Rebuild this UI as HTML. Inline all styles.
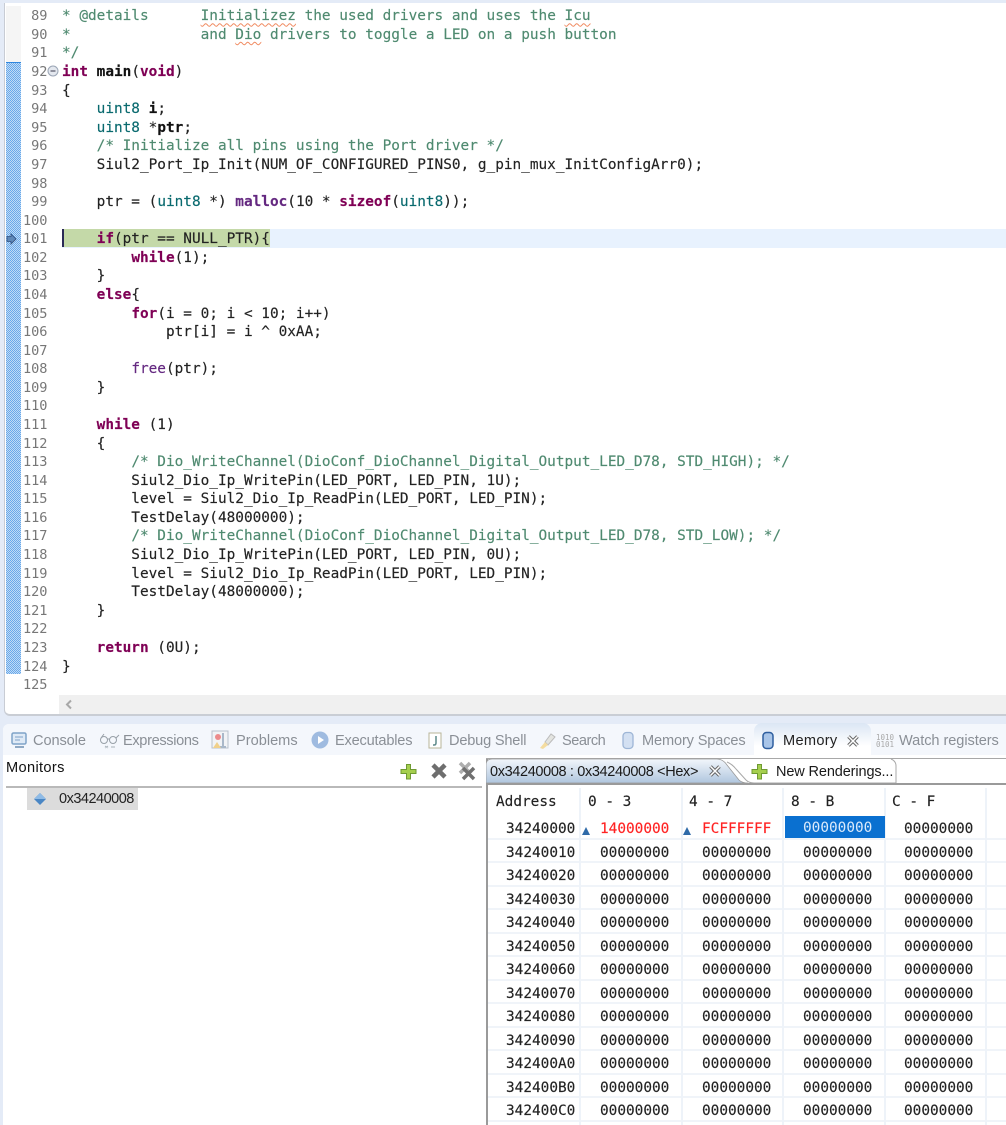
<!DOCTYPE html>
<html><head><meta charset="utf-8"><style>
html,body{margin:0;padding:0}
body{width:1006px;height:1125px;position:relative;overflow:hidden;background:#e4ebf7;font-family:"Liberation Sans",sans-serif}
#wrap{position:absolute;left:0;top:0;width:1006px;height:1125px;filter:blur(.35px);overflow:hidden}
.a{position:absolute}
pre{margin:0;font-family:"DejaVu Sans Mono",monospace;font-size:14.4px;line-height:18.575px;color:#222}
#code{left:62px;top:7.3px;-webkit-text-stroke:.15px}
#nums{left:14px;width:33.5px;top:7.3px;text-align:right;color:#777;font-size:13.6px}
.k{color:#7f0055;font-weight:bold}.c{color:#4f8a70}.t{color:#0a6a6f}.m{color:#642880;font-weight:bold}.b{font-weight:bold;color:#111}
.w{text-decoration:underline wavy #f08a60 1px;text-underline-offset:2px}
.tab{font-size:14.6px;color:#8a8f96;top:733px;white-space:nowrap}
.row{position:absolute;left:488px;width:518px;height:23.5px;box-sizing:border-box;border-bottom:2px solid #f0f4f9;font:14.4px/27px "DejaVu Sans Mono",monospace;color:#222;-webkit-text-stroke:.15px}
.row span{position:absolute;top:0;white-space:nowrap}
.row span:nth-child(1){left:18px}.row span:nth-child(2){left:112px}.row span:nth-child(3){left:214px}.row span:nth-child(4){left:315px}.row span:nth-child(5){left:416px}
.v{position:absolute;top:788px;height:337px;width:2px;background:#eef3f9}
.h{position:absolute;top:791px;font:14.4px/22px "DejaVu Sans Mono",monospace;color:#222;-webkit-text-stroke:.15px}
</style></head><body><div id="wrap">
<div class="a" style="left:4px;top:3px;width:1002px;height:713px;background:#fff;border-left:1px solid #c8ccd4;border-bottom:2px solid #c9cdd4;border-bottom-left-radius:6px;box-sizing:border-box"></div>
<div class="a" style="left:6px;top:6px;width:15px;height:56px;background:#f5f5f5"></div>
<div class="a" style="left:6px;top:62px;width:15px;height:612px;background-color:#8abcee;background-image:conic-gradient(#6aa8ea 25%,#c0dcf6 0 50%,#6aa8ea 0 75%,#c0dcf6 0);background-size:2px 2px;border-top:1px solid #2f86de;box-sizing:border-box"></div>
<div class="a" style="left:62px;top:229px;width:944px;height:19px;background:#e8f2fe"></div>
<div class="a" style="left:62px;top:229px;width:208px;height:18px;background:#c4d9a8"></div>
<div class="a" style="left:62px;top:229px;width:2px;height:18px;background:#2a2a55"></div>
<pre class="a" id="nums">89
90
91
92
93
94
95
96
97
98
99
100
101
102
103
104
105
106
107
108
109
110
111
112
113
114
115
116
117
118
119
120
121
122
123
124
125</pre>
<svg class="a" style="left:47px;top:65px" width="12" height="12"><circle cx="6" cy="6" r="5" fill="#e4e8ef" stroke="#9aa5b5"/><path d="M3.500 6h5" stroke="#556" stroke-width="1.200"/></svg>
<svg class="a" style="left:6px;top:233px" width="11" height="12"><path d="M1 3.500h4V1l5 5-5 5V8.500H1z" fill="#5f88b8" stroke="#2f4f7f" stroke-width=".8"/></svg>
<pre class="a" id="code"><span class="c">* @details      <span class="w">Initializez</span> the used drivers and uses the <span class="w">Icu</span>
*               and <span class="w">Dio</span> drivers to toggle a LED on a push button
*/</span>
<span class="k">int</span> <span class="b">main</span>(<span class="k">void</span>)
{
    <span class="t">uint8</span> <span class="b">i</span>;
    <span class="t">uint8</span> *<span class="b">ptr</span>;
    <span class="c">/* Initialize all pins using the Port driver */</span>
    Siul2_Port_Ip_Init(NUM_OF_CONFIGURED_PINS0, g_pin_mux_InitConfigArr0);

    ptr = (<span class="t">uint8</span> *) <span class="m">malloc</span>(10 * <span class="k">sizeof</span>(<span class="t">uint8</span>));

    <span class="k">if</span>(ptr == NULL_PTR){
        <span class="k">while</span>(1);
    }
    <span class="k">else</span>{
        <span class="k">for</span>(i = 0; i &lt; 10; i++)
            ptr[i] = i ^ 0xAA;

        <span class="m" style="font-weight:normal">free</span>(ptr);
    }

    <span class="k">while</span> (1)
    {
        <span class="c">/* Dio_WriteChannel(DioConf_DioChannel_Digital_Output_LED_D78, STD_HIGH); */</span>
        Siul2_Dio_Ip_WritePin(LED_PORT, LED_PIN, 1U);
        level = Siul2_Dio_Ip_ReadPin(LED_PORT, LED_PIN);
        TestDelay(48000000);
        <span class="c">/* Dio_WriteChannel(DioConf_DioChannel_Digital_Output_LED_D78, STD_LOW); */</span>
        Siul2_Dio_Ip_WritePin(LED_PORT, LED_PIN, 0U);
        level = Siul2_Dio_Ip_ReadPin(LED_PORT, LED_PIN);
        TestDelay(48000000);
    }

    <span class="k">return</span> (0U);
}
</pre>
<div class="a" style="left:59px;top:695px;width:947px;height:19px;background:#f0f0f0"></div>
<svg class="a" style="left:64px;top:699px" width="10" height="11"><path d="M7 1.500L3 5.500l4 4" fill="none" stroke="#a8a8a8" stroke-width="2"/></svg>

<div class="a" style="left:3px;top:724px;width:1003px;height:401px;background:#fff;border-top-left-radius:6px"></div>
<div class="a" style="left:3px;top:724px;width:1003px;height:31px;background:#f4f7fc;border-top-left-radius:6px"></div>
<div class="a" style="left:754px;top:723px;width:117px;height:33px;background:linear-gradient(#dbe6f4,#fff 70%);border-radius:8px 8px 0 0"></div>

<svg class="a" style="left:11px;top:732px" width="17" height="17"><rect x="1" y="1" width="14" height="11" rx="1.500" fill="#dfeaf6" stroke="#7fa3c8" stroke-width="1.500"/><path d="M4 5h8M4 8h5" stroke="#7fa3c8"/><path d="M4 15h9" stroke="#8fa9c4" stroke-width="2"/></svg>
<div class="a tab" style="left:33px;letter-spacing:-.1px">Console</div>
<svg class="a" style="left:98px;top:732px" width="22" height="17"><circle cx="6" cy="8" r="3.500" fill="none" stroke="#98a0a8"/><circle cx="15" cy="8" r="3.500" fill="none" stroke="#98a0a8"/><path d="M9 7l3 0M18 6l3-3M3 6l3-4" stroke="#98a0a8" fill="none"/><path d="M7 14l3 2M10 14l-3 2M13 15h4" stroke="#a8b0b8"/></svg>
<div class="a tab" style="left:123px;letter-spacing:-.36px">Expressions</div>
<svg class="a" style="left:211px;top:730px" width="19" height="20"><rect x="1" y="1" width="16" height="17" fill="#f1f3f6" stroke="#b7c0cc"/><circle cx="7" cy="7" r="3" fill="#ec8b8b"/><path d="M12 3v13M9 17h6" stroke="#a9b8c9" stroke-width="2"/><path d="M2 18l4-6 4 6z" fill="#f0d08a"/></svg>
<div class="a tab" style="left:236px">Problems</div>
<svg class="a" style="left:311px;top:731px" width="18" height="18"><circle cx="9" cy="9" r="8.500" fill="#9fbbe0"/><path d="M7 5l6 4-6 4z" fill="#fff"/></svg>
<div class="a tab" style="left:335px;letter-spacing:-.2px">Executables</div>
<svg class="a" style="left:427px;top:731px" width="16" height="19"><rect x="2" y="2" width="12" height="15" fill="#fff" stroke="#b8b498"/><path d="M9 5v7q0 2-2 2H6" fill="none" stroke="#5d8a8a" stroke-width="1.500"/></svg>
<div class="a tab" style="left:449px;letter-spacing:-.2px">Debug Shell</div>
<svg class="a" style="left:538px;top:731px" width="20" height="19"><path d="M7 11l6-8 4 3-7 8z" fill="#e3e4e0" stroke="#bbb"/><path d="M2 17l5-6 3 3-5 4z" fill="#f4dca0"/></svg>
<div class="a tab" style="left:562px;letter-spacing:-.5px">Search</div>
<svg class="a" style="left:621px;top:731px" width="14" height="19"><rect x="2" y="1.500" width="10" height="16" rx="3.500" fill="#d3e0f2" stroke="#9eb6d6" stroke-width="1.300"/></svg>
<div class="a tab" style="left:642px;letter-spacing:-.15px">Memory Spaces</div>
<svg class="a" style="left:761px;top:731px" width="14" height="19"><rect x="2" y="1.500" width="10" height="16" rx="3.500" fill="#a9c5e8" stroke="#2f5f9f" stroke-width="1.500"/></svg>
<div class="a tab" style="left:783px;color:#222;letter-spacing:.3px">Memory</div>
<svg class="a" style="left:846px;top:734px" width="14" height="14"><path d="M2.500 2.500l9 9M11.500 2.500l-9 9" stroke="#666" stroke-width="3.500"/><path d="M2.500 2.500l9 9M11.500 2.500l-9 9" stroke="#fff" stroke-width="1.500"/></svg>
<div class="a" style="left:876px;top:734px;width:20px;font:7.500px/7px 'DejaVu Sans Mono',monospace;color:#a9a9a9">1010<br>0101</div>
<div class="a tab" style="left:899px;letter-spacing:-.07px">Watch registers</div>

<div class="a" style="left:6px;top:760px;font-size:14.600px;color:#111;letter-spacing:.35px">Monitors</div>
<div class="a" style="left:6px;top:786px;width:476px;height:2px;background:#b9b9b9"></div>
<svg class="a" style="left:400px;top:763px" width="18" height="18"><path d="M6.500 1.500h4v5h5.500v4H10.500v5.500h-4V10.500H1v-4h5.500z" fill="#a5cf4e" stroke="#6f9a32"/></svg>
<svg class="a" style="left:430px;top:762px" width="18" height="18"><path d="M3 3l12 12M15 3L3 15" stroke="#6e6e6e" stroke-width="4.500"/></svg>
<svg class="a" style="left:457px;top:761px" width="20" height="20"><path d="M3 2l10 10M13 2L3 12" stroke="#aeaeae" stroke-width="3.500"/><path d="M6 7l11 11M17 7L6 18" stroke="#707070" stroke-width="3.500"/></svg>
<div class="a" style="left:27px;top:788px;width:111px;height:22px;background:#dcdcdc"></div>
<svg class="a" style="left:33px;top:792px" width="14" height="14"><path d="M7 1l6 6-6 6-6-6z" fill="#4a86c4"/><path d="M1 7l6-6 6 6z" fill="#8fbbe6"/></svg>
<div class="a" style="left:59px;top:791px;font-size:14.500px;color:#222;letter-spacing:-.5px">0x34240008</div>

<div class="a" style="left:486px;top:758px;width:520px;height:367px;border-left:2px solid #9a9a9a;box-sizing:border-box"></div>
<div class="a" style="left:486px;top:758px;width:520px;height:1px;background:#a8a8a8"></div>
<svg class="a" style="left:486px;top:758px" width="416" height="26"><defs><linearGradient id="g" x1="0" y1="0" x2="0" y2="1"><stop offset="0" stop-color="#f2f6fb"/><stop offset="1" stop-color="#adc4dd"/></linearGradient></defs><path d="M0 26V7q0-6 6-6h225q6 0 10 6l12 15q3 3 9 3H0z" fill="url(#g)" stroke="#9a9a9a" stroke-width=".8"/><path d="M241 4q5 2 9 7l10 11q3 3 8 3h142V8q0-5-5-7" fill="#fff" stroke="#a8a8a8"/></svg>
<div class="a" style="left:490px;top:764px;font-size:14.500px;color:#1a1a1a;white-space:nowrap;letter-spacing:-.36px">0x34240008 : 0x34240008 &lt;Hex&gt;</div>
<svg class="a" style="left:708px;top:764px" width="14" height="14"><path d="M2.500 2.500l9 9M11.500 2.500l-9 9" stroke="#666" stroke-width="3.500"/><path d="M2.500 2.500l9 9M11.500 2.500l-9 9" stroke="#fff" stroke-width="1.500"/></svg>
<svg class="a" style="left:751px;top:763px" width="18" height="18"><path d="M6.500 1.500h4v5h5.500v4H10.500v5.500h-4V10.500H1v-4h5.500z" fill="#a5cf4e" stroke="#6f9a32"/></svg>
<div class="a" style="left:776px;top:764px;font-size:14.500px;color:#1a1a1a;letter-spacing:-.12px">New Renderings...</div>
<div class="a" style="left:488px;top:783px;width:518px;height:2px;background:#9a9a9a"></div>

<div class="h" style="left:496px">Address</div>
<div class="h" style="left:588px">0 - 3</div>
<div class="h" style="left:689px">4 - 7</div>
<div class="h" style="left:791px">8 - B</div>
<div class="h" style="left:892px">C - F</div>

<div class="row" style="top:816px"><span>34240000</span><span style="color:#f22">14000000</span><span style="color:#f22">FCFFFFFF</span><span></span><span>00000000</span></div>
<div class="row" style="top:839.500px"><span>34240010</span><span>00000000</span><span>00000000</span><span>00000000</span><span>00000000</span></div>
<div class="row" style="top:863px"><span>34240020</span><span>00000000</span><span>00000000</span><span>00000000</span><span>00000000</span></div>
<div class="row" style="top:886.500px"><span>34240030</span><span>00000000</span><span>00000000</span><span>00000000</span><span>00000000</span></div>
<div class="row" style="top:910px"><span>34240040</span><span>00000000</span><span>00000000</span><span>00000000</span><span>00000000</span></div>
<div class="row" style="top:933.500px"><span>34240050</span><span>00000000</span><span>00000000</span><span>00000000</span><span>00000000</span></div>
<div class="row" style="top:957px"><span>34240060</span><span>00000000</span><span>00000000</span><span>00000000</span><span>00000000</span></div>
<div class="row" style="top:980.500px"><span>34240070</span><span>00000000</span><span>00000000</span><span>00000000</span><span>00000000</span></div>
<div class="row" style="top:1004px"><span>34240080</span><span>00000000</span><span>00000000</span><span>00000000</span><span>00000000</span></div>
<div class="row" style="top:1027.500px"><span>34240090</span><span>00000000</span><span>00000000</span><span>00000000</span><span>00000000</span></div>
<div class="row" style="top:1051px"><span>342400A0</span><span>00000000</span><span>00000000</span><span>00000000</span><span>00000000</span></div>
<div class="row" style="top:1074.500px"><span>342400B0</span><span>00000000</span><span>00000000</span><span>00000000</span><span>00000000</span></div>
<div class="row" style="top:1098px"><span>342400C0</span><span>00000000</span><span>00000000</span><span>00000000</span><span>00000000</span></div>

<div class="v" style="left:579px"></div><div class="v" style="left:681px"></div><div class="v" style="left:782px"></div><div class="v" style="left:884px"></div><div class="v" style="left:985px"></div>
<div class="a" style="left:785px;top:816px;width:100px;height:22px;background:#0a70d0"></div>
<div class="a" style="left:803px;top:816px;font:14.400px/25px 'DejaVu Sans Mono',monospace;color:#dbeafb">00000000</div>
<svg class="a" style="left:581px;top:826px" width="10" height="10"><path d="M5 1l4 8H1z" fill="#2f6aa8"/></svg>
<svg class="a" style="left:682px;top:826px" width="10" height="10"><path d="M5 1l4 8H1z" fill="#2f6aa8"/></svg>
</div></body></html>
